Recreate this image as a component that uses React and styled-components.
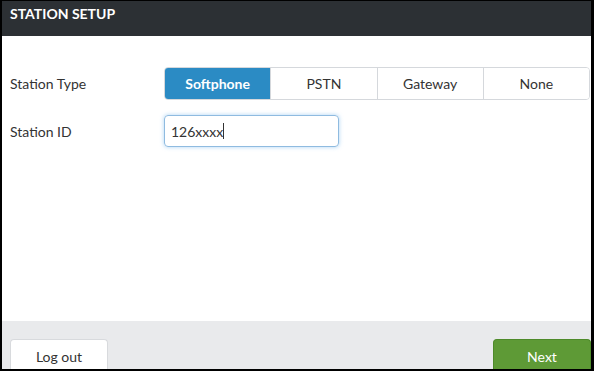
import React from "react";
import styled, { createGlobalStyle } from "styled-components";

const Global = createGlobalStyle`
  html, body { margin: 0; padding: 0; background: #000; }
  body { font-family: Lato, "Open Sans", sans-serif; }
  #root { width: 594px; height: 371px; }
`;

const Frame = styled.div`
  box-sizing: border-box;
  width: 594px;
  height: 371px;
  padding: 1px 3px 2px 2px;
  background: #000;
`;

const Window = styled.div`
  display: flex;
  flex-direction: column;
  width: 100%;
  height: 100%;
  background: #fff;
  overflow: hidden;
`;

const Header = styled.div`
  flex: 0 0 35px;
  background: #2c3034;
  color: #fff;
  display: flex;
  align-items: center;
  padding: 0 8px 11px;
  box-sizing: border-box;
  font-size: 14px;
  font-weight: 700;
`;

const Body = styled.div`
  flex: 1;
  display: flex;
  flex-direction: column;
  gap: 15px;
  padding: 31px 0 0 8px;
`;

const Row = styled.div`
  display: flex;
  align-items: center;
`;

const Label = styled.div`
  width: 154px;
  font-size: 14px;
  color: #333;
`;

const Segmented = styled.div`
  display: flex;
  width: 426px;
  height: 33px;
  border: 1px solid #d5d8dc;
  border-radius: 4px;
  box-sizing: border-box;
  overflow: hidden;
`;

const Segment = styled.div`
  flex: 1;
  display: flex;
  align-items: center;
  justify-content: center;
  font-size: 14px;
  color: ${(p) => (p.$active ? "#fff" : "#333")};
  font-weight: ${(p) => (p.$active ? 700 : 400)};
  background: ${(p) => (p.$active ? "#2b8bc4" : "#fff")};
  border-left: ${(p) => (p.$first ? "none" : "1px solid #d5d8dc")};
`;

const Input = styled.div`
  box-sizing: border-box;
  width: 175px;
  height: 32px;
  border: 1px solid #8fbbe0;
  border-radius: 4px;
  box-shadow: 0 0 4px rgba(102, 175, 233, 0.55);
  display: flex;
  align-items: center;
  padding-left: 6px;
  font-size: 14px;
  color: #333;
`;

const Caret = styled.span`
  display: inline-block;
  width: 1px;
  height: 16px;
  background: #333;
`;

const Footer = styled.div`
  flex: 0 0 48px;
  height: 48px;
  min-height: 0;
  overflow: hidden;
  background: #e9eaec;
  display: flex;
  justify-content: space-between;
  align-items: flex-start;
  padding: 18px 0 0 8px;
  box-sizing: border-box;
`;

const Button = styled.div`
  flex: 0 0 98px;
  height: 36px;
  box-sizing: border-box;
  border-radius: 4px 4px 0 0;
  display: flex;
  align-items: flex-start;
  justify-content: center;
  padding-top: 8px;
  font-size: 14px;
  background: ${(p) => (p.$primary ? "#5e9a36" : "#fff")};
  color: ${(p) => (p.$primary ? "#fff" : "#333")};
  border: 1px solid ${(p) => (p.$primary ? "#4e8a2a" : "#d8dadd")};
  border-bottom: none;
`;

export default function App() {
  return (
    <>
      <Global />
      <Frame>
        <Window>
          <Header>STATION SETUP</Header>
          <Body>
            <Row>
              <Label>Station Type</Label>
              <Segmented>
                <Segment $first $active>Softphone</Segment>
                <Segment>PSTN</Segment>
                <Segment>Gateway</Segment>
                <Segment>None</Segment>
              </Segmented>
            </Row>
            <Row>
              <Label>Station ID</Label>
              <Input>
                126xxxx<Caret />
              </Input>
            </Row>
          </Body>
          <Footer>
            <Button>Log out</Button>
            <Button $primary>Next</Button>
          </Footer>
        </Window>
      </Frame>
    </>
  );
}
